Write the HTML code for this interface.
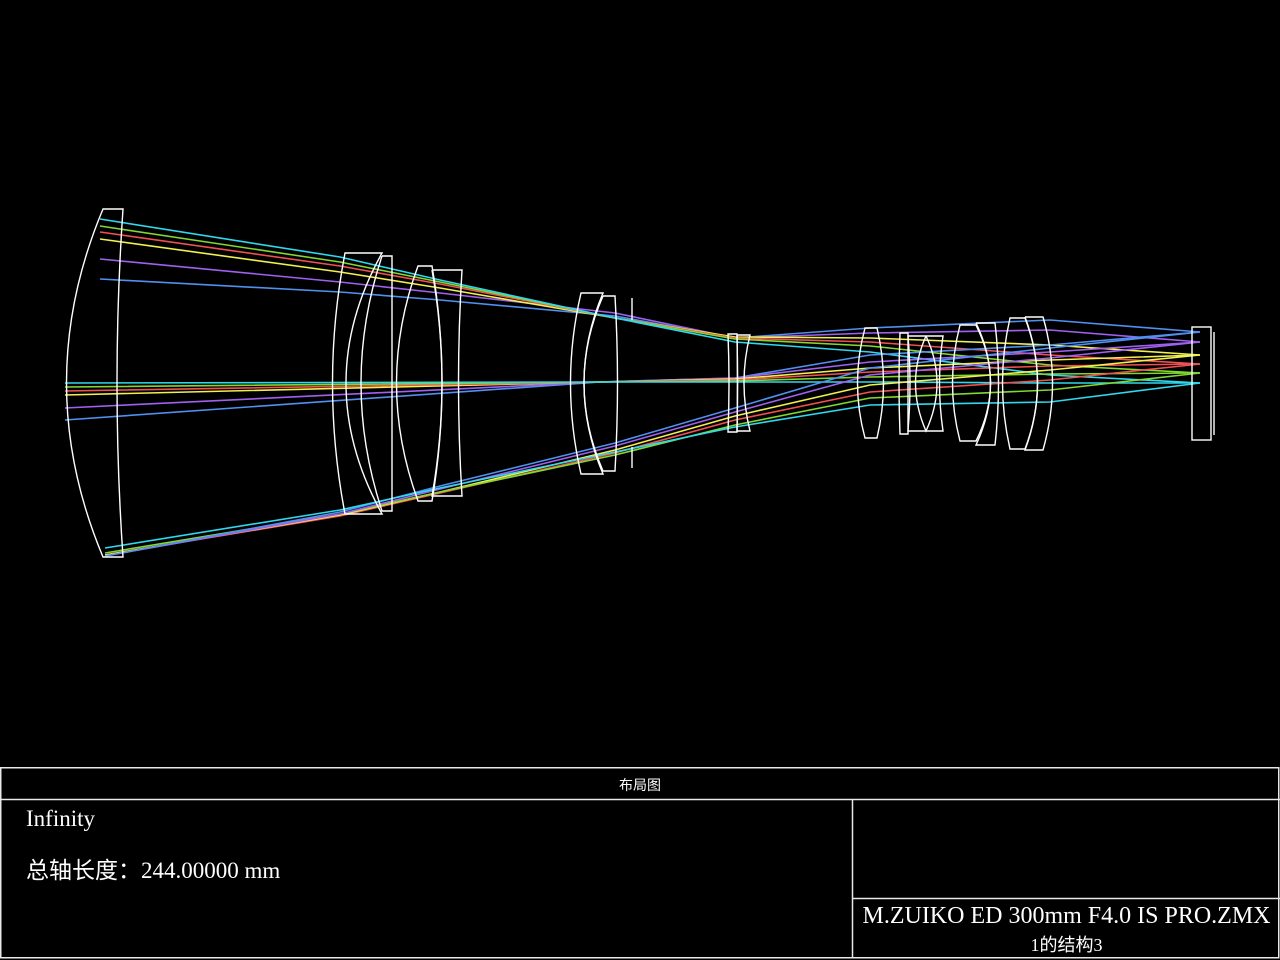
<!DOCTYPE html>
<html><head><meta charset="utf-8"><style>
html,body{margin:0;padding:0;background:#000;width:1280px;height:960px;overflow:hidden}
svg{position:absolute;left:0;top:0}
.t{position:absolute;color:#fff;white-space:nowrap}
</style></head><body>
<svg width="1280" height="960" viewBox="0 0 1280 960">
<g fill="none" stroke-width="1.6" stroke-linejoin="round">
<polyline stroke="#5090f0" points="100,279 340,292 440,300 615,316 735,338 870,328 1050,320 1200,332"/>
<polyline stroke="#a060f0" points="100,259 340,282 440,293 615,313 735,338 870,333 1050,330 1200,342"/>
<polyline stroke="#f0f050" points="100,239 340,272 440,288 615,318 735,337 870,338 1050,345 1200,355"/>
<polyline stroke="#f05050" points="100,232 340,266 440,284 615,318 735,338 870,342 1050,355 1200,364"/>
<polyline stroke="#80d830" points="100,226 340,262 440,282 615,318 735,339 870,346 1050,365 1200,373"/>
<polyline stroke="#2fd8ee" points="100,219 340,257 440,280 615,318 735,342 870,352 1050,375 1200,383"/>
<polyline stroke="#5090f0" points="65,420 600,382 735,378 870,355 1050,345 1200,332"/>
<polyline stroke="#a060f0" points="65,408 600,382 735,378 870,362 1050,352 1200,342"/>
<polyline stroke="#f0f050" points="65,395 600,382 735,379 870,368 1050,360 1200,355"/>
<polyline stroke="#f05050" points="65,391 600,382 735,380 870,372 1050,366 1200,364"/>
<polyline stroke="#80d830" points="65,387 600,382 735,381 870,377 1050,374 1200,373"/>
<polyline stroke="#2fd8ee" points="65,383 600,382 735,382 870,382 1050,383 1200,383"/>
<polyline stroke="#f05050" points="105,555 340,516 440,493 615,453 735,420 870,392 1050,380 1200,364"/>
<polyline stroke="#f0f050" points="105,555 340,515 440,492 615,450 735,416 870,385 1050,370 1200,355"/>
<polyline stroke="#80d830" points="105,553 340,514 440,492 615,455 735,425 870,398 1050,390 1200,373"/>
<polyline stroke="#a060f0" points="105,556 340,514 440,489 615,446 735,412 870,375 1050,358 1200,342"/>
<polyline stroke="#5090f0" points="105,556 340,512 440,486 615,443 735,408 870,368 1050,348 1200,332"/>
<polyline stroke="#2fd8ee" points="105,548 340,510 440,488 615,452 735,427 870,405 1050,402 1200,383"/>
</g>
<g fill="none" stroke="#fff" stroke-width="1.4">
<path d="M103,209 Q30,383 103,557 L123,557 Q111,383 123,209 Z"/>
<path d="M345,253 Q320,383 345,514 L382,514 Q310,383 382,253 Z"/>
<path d="M382,256 L392,256 L392,511 L382,511 Q340,383 382,256"/>
<path d="M418,266 L432,266 Q452,383 432,501 L418,501 Q375,383 418,266 Z"/>
<path d="M432,270 L462,270 Q455,383 462,496 L432,496 Q452,383 432,270"/>
<path d="M581,293 L603,293 Q565,383 603,474 L581,474 Q560,383 581,293 Z"/>
<path d="M603,296 L615,296 Q620,383 615,471 L603,471 Q565,383 603,296"/>
<path d="M632,298 V320 M632,447 V468"/>
<path d="M728,334 L737,334 Q738,383 737,432 L728,432 Q730,383 728,334 Z"/>
<path d="M737,335 L750,335 Q738,383 750,431 L737,431 Q738,383 737,335"/>
<path d="M865,328 L877,328 Q890,383 877,438 L865,438 Q850,383 865,328 Z"/>
<path d="M900,333 L908,333 L908,434 L900,434 Q898,383 900,333 Z"/>
<path d="M908,336 L943,336 Q936,383 943,431 L908,431 Q912,383 908,336 Z"/>
<path d="M926,336 Q905,383 926,431 Q948,383 926,336"/>
<path d="M960,325 L976,325 Q1005,383 976,441 L960,441 Q945,383 960,325 Z"/>
<path d="M976,323 L995,323 Q1002,383 995,445 L976,445 Q1005,383 976,323"/>
<path d="M1010,318 L1025,318 Q1050,383 1025,449 L1010,449 Q995,383 1010,318 Z"/>
<path d="M1025,317 L1043,317 Q1062,383 1043,450 L1025,450 Q1050,383 1025,317"/>
<rect x="1192" y="327" width="19" height="113"/>
<path d="M1214,332 V435"/>
</g>
<g fill="none" stroke="#e8e8e8" stroke-width="1.5">
<rect x="0.75" y="767.75" width="1278" height="190"/>
<path d="M0,799.5 H1280 M852.5,799 V958 M852,898.5 H1280"/>
</g>
</svg>
<div class="t" style="left:0;width:1280px;text-align:center;top:775px;font:14px 'Liberation Sans','Noto Sans CJK SC',sans-serif">布局图</div>
<div class="t" style="left:26px;top:806px;font:23px 'Liberation Serif','Noto Serif CJK SC',serif">Infinity</div>
<div class="t" style="left:26px;top:851px;font:23px 'Liberation Serif','Noto Sans CJK SC',serif">总轴长度：244.00000 mm</div>
<div class="t" style="left:853px;width:427px;text-align:center;top:903px;font:24px 'Liberation Serif',serif">M.ZUIKO ED 300mm F4.0 IS PRO.ZMX</div>
<div class="t" style="left:853px;width:427px;text-align:center;top:931px;font:18px 'Liberation Serif','Noto Sans CJK SC',serif">1的结构3</div>
</body></html>
